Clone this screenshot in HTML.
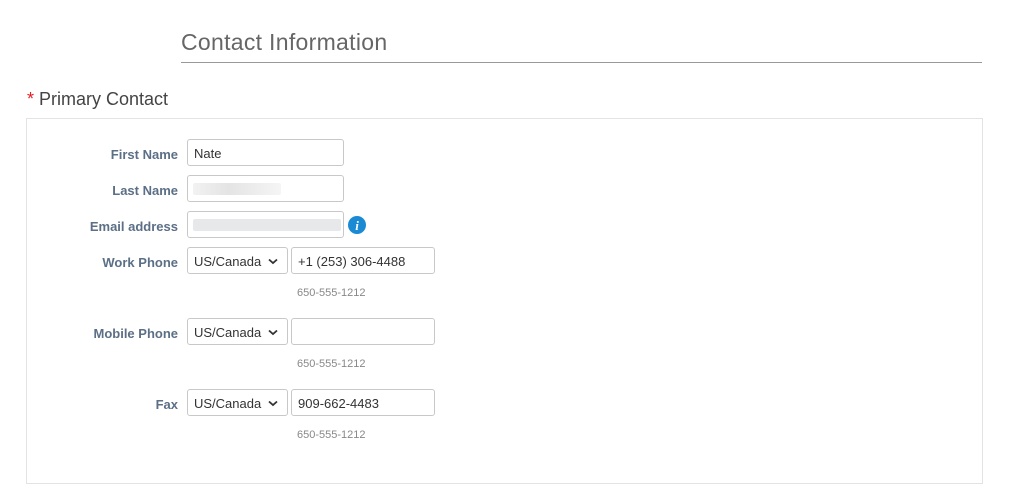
<!DOCTYPE html>
<html><head><style>
body{margin:0;width:1030px;height:499px;background:#fff;font-family:"Liberation Sans",Arial,sans-serif;position:relative;overflow:hidden}
.a{position:absolute}
.h{left:181px;top:29px;font-size:23px;color:#666;font-weight:300;letter-spacing:0.3px}
.line{left:181px;top:62px;width:801px;height:1px;background:#999}
.pc{left:27px;top:89px;font-size:18px;color:#444}
.pc b{color:#e02020;font-weight:normal}
.box{left:26px;top:118px;width:955px;height:364px;border:1px solid #e3e3e3}
.lbl{width:150px;left:28px;text-align:right;font-size:13px;font-weight:bold;color:#5b6f86}
.in{border:1px solid #c8c8c8;border-radius:3px;height:26px;box-sizing:border-box;font-size:13px;color:#333;padding:6px 6px 0}
.sel{left:187px;width:101px}
.ph{left:291px;width:144px}
.chev{position:absolute;right:9px;top:10px}
.hint{left:297px;font-size:11px;color:#888}
.blur{position:absolute;left:5px;top:7px;height:12px;border-radius:2px}
</style></head><body>
<div class="a h">Contact Information</div>
<div class="a line"></div>
<div class="a pc"><b>*</b> Primary Contact</div>
<div class="a box"></div>

<div class="a lbl" style="top:147px">First Name</div>
<div class="a in" style="left:187px;top:139px;width:157px;height:27px">Nate</div>
<div class="a lbl" style="top:183px">Last Name</div>
<div class="a in" style="left:187px;top:175px;width:157px;height:27px"><div class="blur" style="width:88px;background:linear-gradient(90deg,#f2f2f2,#e4e4e4 40%,#f5f5f5)"></div></div>
<div class="a lbl" style="top:219px">Email address</div>
<div class="a in" style="left:187px;top:211px;width:157px;height:27px"><div class="blur" style="width:148px;background:#e6e8ea"></div></div>
<svg class="a" style="left:348px;top:216px" width="18" height="18" viewBox="0 0 18 18"><circle cx="9" cy="9" r="9" fill="#1a8ad4"/><text x="9" y="14" text-anchor="middle" font-family="Liberation Serif" font-style="italic" font-weight="bold" font-size="13" fill="#fff">i</text></svg>

<div class="a lbl" style="top:255px">Work Phone</div>
<div class="a in sel" style="top:247px;height:27px">US/Canada<svg class="chev" width="10" height="7" viewBox="0 0 10 7"><path d="M1 1.5L5 5L9 1.5" stroke="#333" stroke-width="1.8" fill="none"/></svg></div>
<div class="a in ph" style="top:247px;height:27px">+1 (253) 306-4488</div>
<div class="a hint" style="top:287px">650-555-1212</div>

<div class="a lbl" style="top:326px">Mobile Phone</div>
<div class="a in sel" style="top:318px;height:27px">US/Canada<svg class="chev" width="10" height="7" viewBox="0 0 10 7"><path d="M1 1.5L5 5L9 1.5" stroke="#333" stroke-width="1.8" fill="none"/></svg></div>
<div class="a in ph" style="top:318px;height:27px"></div>
<div class="a hint" style="top:358px">650-555-1212</div>

<div class="a lbl" style="top:397px">Fax</div>
<div class="a in sel" style="top:389px;height:27px">US/Canada<svg class="chev" width="10" height="7" viewBox="0 0 10 7"><path d="M1 1.5L5 5L9 1.5" stroke="#333" stroke-width="1.8" fill="none"/></svg></div>
<div class="a in ph" style="top:389px;height:27px">909-662-4483</div>
<div class="a hint" style="top:429px">650-555-1212</div>
</body></html>
